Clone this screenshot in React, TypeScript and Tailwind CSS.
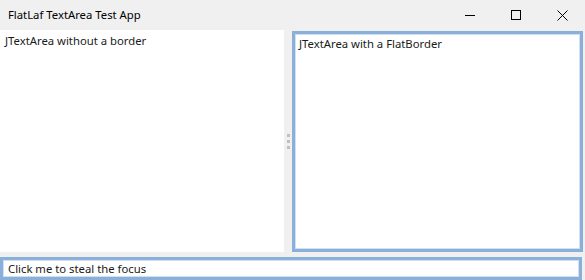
export default function App() {
  const font = { fontFamily: '"Segoe UI", "Noto Sans", sans-serif' };
  return (
    <div className="w-[585px] h-[280px] flex flex-col bg-[#f0f0f0] overflow-hidden text-[11.3px] text-[#1a1a1a]" style={font}>
      {/* title bar */}
      <div className="h-[30px] flex items-center bg-[#f0f0f0] shrink-0">
        <div className="pl-[8px] flex-1 text-[11.3px] text-black">FlatLaf TextArea Test App</div>
        <div className="flex h-full">
          <div className="w-[46px] h-full flex items-center justify-center">
            <div className="w-[10px] h-px bg-black" />
          </div>
          <div className="w-[46px] h-full flex items-center justify-center">
            <div className="w-[10px] h-[10px] border border-black" />
          </div>
          <div className="w-[46px] h-full flex items-center justify-center">
            <svg width="11" height="11" viewBox="0 0 11 11">
              <path d="M0.5 0.5 L10.5 10.5 M10.5 0.5 L0.5 10.5" stroke="black" strokeWidth="1" />
            </svg>
          </div>
        </div>
      </div>

      {/* split pane */}
      <div className="flex h-[222px] shrink-0">
        <div className="w-[284px] bg-white pl-[5px] pt-[3px] leading-[16px]">JTextArea without a border</div>
        <div className="w-[8px] flex flex-col items-center justify-center gap-[3px]">
          <div className="w-[3px] h-[3px] bg-[#c0c0c0]" />
          <div className="w-[3px] h-[3px] bg-[#c0c0c0]" />
          <div className="w-[3px] h-[3px] bg-[#c0c0c0]" />
        </div>
        <div className="w-[291px] mt-[1px] border-[3px] border-[#8aafd9]">
          <div className="h-full border border-[#cfe0f3] bg-white pl-[3px] pt-[1px] leading-[16px]">
            JTextArea with a FlatBorder
          </div>
        </div>
      </div>

      <div className="h-[5px] shrink-0" />

      {/* text field */}
      <div className="w-[582px] h-[23px] border-[3px] border-[#8aafd9]">
        <div className="h-full border border-[#cfe0f3] bg-white pl-[4px] flex items-center leading-[14px]">
          Click me to steal the focus
        </div>
      </div>
    </div>
  );
}
